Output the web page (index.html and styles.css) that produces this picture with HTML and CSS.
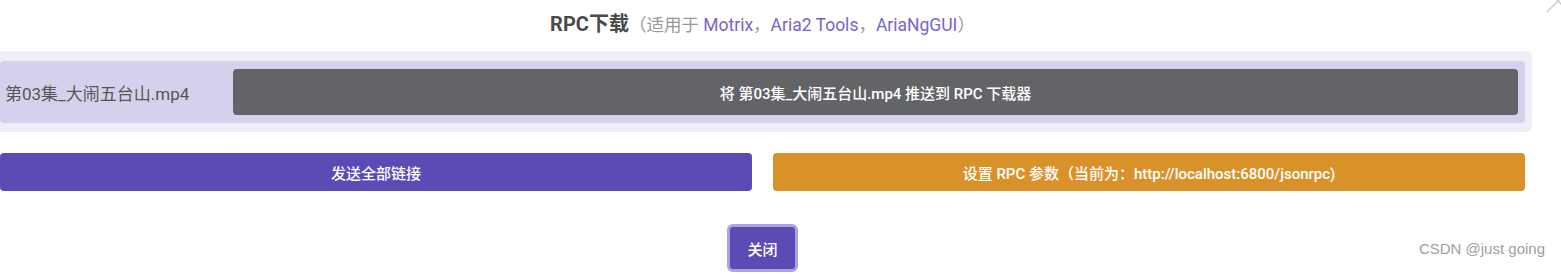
FILE: index.html
```html
<!DOCTYPE html>
<html lang="zh-CN">

<head>
	<meta charset="UTF-8">
	<title>RPC下载</title>
	<link rel="stylesheet" href="styles.css">
</head>

<body>
	<div class="dialog">
		<h2 class="title">
			<b>RPC下载</b><span class="hint">（适用于 <a>Motrix</a>，<a>Aria2 Tools</a>，<a>AriaNgGUI</a>）</span>
		</h2>
		<div class="panel">
			<div class="file-row">
				<div class="file-name">第03集_大闹五台山.mp4</div>
				<button class="btn btn-dark">将 第03集_大闹五台山.mp4 推送到 RPC 下载器</button>
			</div>
		</div>
		<div class="actions">
			<button class="btn btn-purple">发送全部链接</button>
			<button class="btn btn-orange">设置 RPC 参数（当前为：http://localhost:6800/jsonrpc)</button>
		</div>
		<div class="footer">
			<button class="btn btn-close">关闭</button>
		</div>
	</div>
	<svg class="corner-x" width="30" height="30" viewBox="0 0 30 30">
		<path d="M4 26 L26 4 M4 4 L26 26" stroke="#cfcfcf" stroke-width="1.6" fill="none"/>
	</svg>
	<div class="watermark">CSDN @just going</div>
</body>

</html>
```

FILE: styles.css
```css
/*
  RPC download dialog
*/
html, body {
	margin: 0;
	padding: 0;
}

body {
	width: 1561px;
	height: 274px;
	overflow: hidden;
	position: relative;
	background: #fff;
	font-family: Roboto, "Noto Sans CJK SC", sans-serif;
}

.dialog {
	width: 1525px;
}

.title {
	margin: 0 0 3px;
	height: 48px;
	line-height: 48px;
	text-align: center;
	font-size: 20px;
	font-weight: normal;
	color: #4a4a4a;
}

.title b {
	font-weight: 700;
}

.hint {
	font-size: 17.5px;
	color: #999;
}

.hint a {
	color: #7566cc;
}

.panel {
	margin-right: -7px;
	padding: 10px 7px 9px 0;
	background: #efedf8;
	border-radius: 0 6px 6px 0;
}

.file-row {
	display: flex;
	height: 62px;
	box-sizing: border-box;
	padding: 8px 7px 8px 0;
	background: #d5d1ec;
	border-radius: 4px;
}

.file-name {
	width: 233px;
	box-sizing: border-box;
	padding: 13px 0 0 5px;
	line-height: 24px;
	font-size: 17px;
	color: #555;
	white-space: nowrap;
}

.btn {
	border: none;
	border-radius: 4px;
	color: #fff;
	font-family: Roboto, "Noto Sans CJK SC", sans-serif;
	font-size: 15px;
	font-weight: 500;
	cursor: pointer;
}

.btn-dark {
	flex: 1;
	height: 46px;
	background: #636467;
}

.actions {
	display: flex;
	gap: 21px;
	margin-top: 21px;
}

.actions .btn {
	flex: 1;
	height: 38px;
}

.btn-purple {
	background: #5a4bb5;
}

.btn-orange {
	background: #d9922a;
}

.footer {
	display: flex;
	justify-content: center;
	margin-top: 33px;
}

.btn-close {
	width: 71px;
	height: 48px;
	background: #5a4bb5;
	border: 3px solid #aba1dc;
	border-radius: 6px;
}

.corner-x {
	position: absolute;
	top: -14px;
	right: -12px;
}

.watermark {
	position: absolute;
	right: 16px;
	bottom: 17px;
	font-family: "Liberation Sans", sans-serif;
	font-size: 15px;
	color: #a0a0a0;
}
```
